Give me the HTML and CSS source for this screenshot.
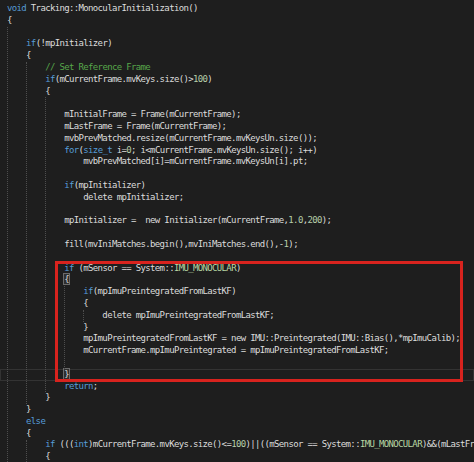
FILE: index.html
```html
<!DOCTYPE html>
<html lang="en">
<head>
    <meta charset="UTF-8">
    <title>Tracking.cc</title>
    <link rel="stylesheet" href="styles.css">
</head>
<body>
    <div class="editor">
        <div class="code">
            <div class="line"><span class="k">void</span> Tracking::MonocularInitialization()</div>
            <div class="line">{</div>
            <div class="line"></div>
            <div class="line">    <span class="k">if</span>(!mpInitializer)</div>
            <div class="line">    {</div>
            <div class="line">        <span class="c">// Set Reference Frame</span></div>
            <div class="line">        <span class="k">if</span>(mCurrentFrame.mvKeys.size()&gt;<span class="n">100</span>)</div>
            <div class="line">        {</div>
            <div class="line"></div>
            <div class="line">            mInitialFrame = Frame(mCurrentFrame);</div>
            <div class="line">            mLastFrame = Frame(mCurrentFrame);</div>
            <div class="line">            mvbPrevMatched.resize(mCurrentFrame.mvKeysUn.size());</div>
            <div class="line">            <span class="k">for</span>(<span class="k">size_t</span> i=<span class="n">0</span>; i&lt;mCurrentFrame.mvKeysUn.size(); i++)</div>
            <div class="line">                mvbPrevMatched[i]=mCurrentFrame.mvKeysUn[i].pt;</div>
            <div class="line"></div>
            <div class="line">            <span class="k">if</span>(mpInitializer)</div>
            <div class="line">                delete mpInitializer;</div>
            <div class="line"></div>
            <div class="line">            mpInitializer =  new Initializer(mCurrentFrame,<span class="n">1.0</span>,<span class="n">200</span>);</div>
            <div class="line"></div>
            <div class="line">            fill(mvIniMatches.begin(),mvIniMatches.end(),-<span class="n">1</span>);</div>
            <div class="line"></div>
            <div class="line">            <span class="k">if</span> (mSensor == System::<span class="e">IMU_MONOCULAR</span>)</div>
            <div class="line">            <span class="match">{</span></div>
            <div class="line">                <span class="k">if</span>(mpImuPreintegratedFromLastKF)</div>
            <div class="line">                {</div>
            <div class="line">                    delete mpImuPreintegratedFromLastKF;</div>
            <div class="line">                }</div>
            <div class="line">                mpImuPreintegratedFromLastKF = new IMU::Preintegrated(IMU::Bias(),*mpImuCalib);</div>
            <div class="line">                mCurrentFrame.mpImuPreintegrated = mpImuPreintegratedFromLastKF;</div>
            <div class="line"></div>
            <div class="line current">            <span class="match">}</span></div>
            <div class="line">            <span class="k">return</span>;</div>
            <div class="line">        }</div>
            <div class="line">    }</div>
            <div class="line">    <span class="k">else</span></div>
            <div class="line">    {</div>
            <div class="line">        <span class="k">if</span> (((<span class="k">int</span>)mCurrentFrame.mvKeys.size()&lt;=<span class="n">100</span>)||((mSensor == System::<span class="e">IMU_MONOCULAR</span>)&amp;&amp;(mLastFrame.mTimeStamp-mInitialFrame.mTimeStamp&gt;<span class="n">1.0</span>)))</div>
            <div class="line">        {</div>
        </div>

        <!-- indent guides -->
        <div class="guide g-fn"></div>
        <div class="guide g-if"></div>
        <div class="guide g-else"></div>
        <div class="guide g-keys"></div>
        <div class="guide g-imu"></div>
        <div class="guide g-last"></div>

        <div class="mark"></div>
    </div>
</body>
</html>
```

FILE: styles.css
```css
body {
    margin: 0;
    background-color: #1e1e1e;
    overflow: hidden;
}
.editor {
    position: relative;
    width: 474px;
    height: 462px;
    overflow: hidden;
    background-color: #1e1e1e;
}
.code {
    padding: 3px 0 0 7px;
    font-family: "DejaVu Sans Mono", monospace;
    font-size: 9px;
    letter-spacing: -0.65px;
    color: #dcdcdc;
}
.line {
    height: 11.8px;
    line-height: 11.8px;
    white-space: pre;
}
.current {
    margin-left: -7px;
    padding-left: 7px;
    box-shadow: inset 0 0 0 1px #333333;
}
.k {
    color: #569cd6;
}
.c {
    color: #57a64a;
}
.n {
    color: #b5cea8;
}
.e {
    color: #b8d7a3;
}
.match {
    outline: 1px solid #6b6b6b;
    background-color: #2f2f2f;
}

.guide {
    position: absolute;
    width: 0;
    border-left: 1px dotted #4e4e4e;
}
.g-fn {
    left: 7px;
    top: 27px;
    bottom: 0;
}
.g-if {
    left: 26px;
    top: 62px;
    height: 342px;
}
.g-else {
    left: 26px;
    top: 440px;
    bottom: 0;
}
.g-keys {
    left: 45px;
    top: 97px;
    height: 295px;
}
.g-imu {
    left: 64px;
    top: 286px;
    height: 83px;
}
.g-last {
    left: 83px;
    top: 310px;
    height: 12px;
}

.mark {
    position: absolute;
    left: 55px;
    top: 261px;
    width: 402px;
    height: 115px;
    border: 3px solid #d8231e;
}
```
